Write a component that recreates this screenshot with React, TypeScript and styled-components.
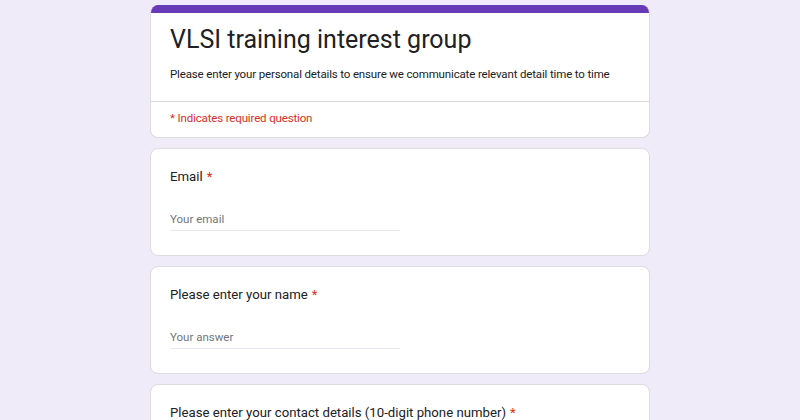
import styled, { createGlobalStyle } from 'styled-components';

const GlobalStyle = createGlobalStyle`
  html, body {
    margin: 0;
    padding: 0;
    background: #f0ebf8;
    font-family: Roboto, Arial, sans-serif;
    color: #202124;
  }
`;

const Page = styled.div`
  width: 500px;
  margin: 0 auto;
  padding-top: 5px;
  display: flex;
  flex-direction: column;
  gap: 10px;
`;

const Card = styled.div`
  background: #fff;
  border: 1px solid #dadce0;
  border-radius: 8px;
  overflow: hidden;
`;

const HeaderCard = styled(Card)`
  border-top: none;
`;

const TopStrip = styled.div`
  height: 8px;
  background: #673ab7;
`;

const HeaderMain = styled.div`
  padding: 11px 19px 19px;
  border-bottom: 1px solid #dadce0;
`;

const Title = styled.h1`
  margin: 0;
  font-family: Roboto, Arial, sans-serif;
  font-weight: 400;
  font-size: 25px;
  line-height: 32px;
  color: #202124;
`;

const Description = styled.p`
  margin: 10px 0 0;
  font-size: 11.5px;
  letter-spacing: -0.15px;
  line-height: 16px;
  color: #202124;
  white-space: nowrap;
`;

const Required = styled.div`
  padding: 8px 19px 11px;
  font-size: 11.5px;
  letter-spacing: -0.15px;
  line-height: 16px;
  color: #d93025;
`;

const Question = styled(Card)`
  padding: 18px 19px 24px;
`;

const Label = styled.div`
  font-size: 13.2px;
  line-height: 20px;
  color: #202124;
`;

const Star = styled.span`
  color: #d93025;
  margin-left: 4px;
`;

const Input = styled.input`
  display: block;
  margin-top: 21px;
  width: 230px;
  height: 23px;
  box-sizing: border-box;
  border: none;
  border-bottom: 1px solid #e8eaed;
  padding: 4px 0 4px;
  font-family: Roboto, Arial, sans-serif;
  font-size: 11.5px;
  line-height: 14px;
  color: #202124;
  outline: none;
  &::placeholder {
    color: #70757a;
  }
`;

const questions = [
  { label: 'Email', placeholder: 'Your email' },
  { label: 'Please enter your name', placeholder: 'Your answer' },
  { label: 'Please enter your contact details (10-digit phone number)', placeholder: 'Your answer' },
];

export default function App() {
  return (
    <>
      <GlobalStyle />
      <Page>
        <HeaderCard>
          <TopStrip />
          <HeaderMain>
            <Title>VLSI training interest group</Title>
            <Description>
              Please enter your personal details to ensure we communicate relevant detail time to time
            </Description>
          </HeaderMain>
          <Required>* Indicates required question</Required>
        </HeaderCard>
        {questions.map((q) => (
          <Question key={q.label}>
            <Label>
              {q.label}
              <Star>*</Star>
            </Label>
            <Input placeholder={q.placeholder} />
          </Question>
        ))}
      </Page>
    </>
  );
}
